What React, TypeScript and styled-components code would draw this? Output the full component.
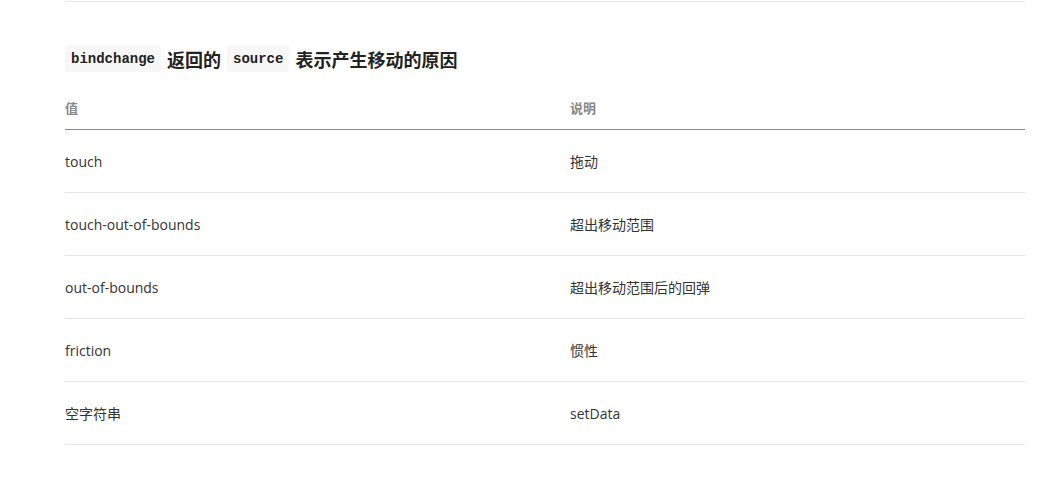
import styled, { createGlobalStyle } from "styled-components";

const GlobalStyle = createGlobalStyle`
  body {
    margin: 0;
    background: #fff;
    font-family: "Open Sans", "Noto Sans CJK SC", sans-serif;
    color: #333;
  }
`;

const rows = [
  { value: "touch", desc: "拖动" },
  { value: "touch-out-of-bounds", desc: "超出移动范围" },
  { value: "out-of-bounds", desc: "超出移动范围后的回弹" },
  { value: "friction", desc: "惯性" },
  { value: "空字符串", desc: "setData" },
];

function App() {
  return (
    <>
      <GlobalStyle />
      <Page>
        <TopRule />
        <Heading>
          <Code>bindchange</Code>
          <span>返回的</span>
          <Code>source</Code>
          <span>表示产生移动的原因</span>
        </Heading>
        <Table>
          <thead>
            <tr>
              <HeadCell $width={505}>值</HeadCell>
              <HeadCell>说明</HeadCell>
            </tr>
          </thead>
          <tbody>
            {rows.map((r) => (
              <tr key={r.value}>
                <Cell>{r.value}</Cell>
                <Cell>{r.desc}</Cell>
              </tr>
            ))}
          </tbody>
        </Table>
      </Page>
    </>
  );
}

const Page = styled.div`
  width: 960px;
  padding-left: 65px;
  padding-top: 1px;
`;

const TopRule = styled.div`
  height: 1px;
  background: #e8e8e8;
`;

const Heading = styled.h3`
  display: flex;
  align-items: center;
  gap: 6px;
  height: 27px;
  margin: 43px 0 0;
  font-size: 18px;
  font-weight: 700;
  color: #222;
`;

const Code = styled.code`
  display: inline-flex;
  align-items: center;
  height: 27px;
  padding: 0 6px;
  background: #f7f7f7;
  border-radius: 3px;
  font-family: "Liberation Mono", "DejaVu Sans Mono", monospace;
  font-size: 14px;
  font-weight: 700;
  color: #222;
`;

const Table = styled.table`
  width: 960px;
  margin-top: 14px;
  border-collapse: collapse;
  font-size: 14px;
`;

const HeadCell = styled.th<{ $width?: number }>`
  width: ${(p) => (p.$width ? `${p.$width}px` : "auto")};
  height: 43px;
  padding: 0;
  text-align: left;
  font-size: 13px;
  font-weight: 700;
  color: #888;
  border-bottom: 1px solid #888;
  vertical-align: middle;
`;

const Cell = styled.td`
  height: 62px;
  padding: 0;
  color: #333;
  border-bottom: 1px solid #e5e5e5;
  vertical-align: middle;
`;

export default App;
